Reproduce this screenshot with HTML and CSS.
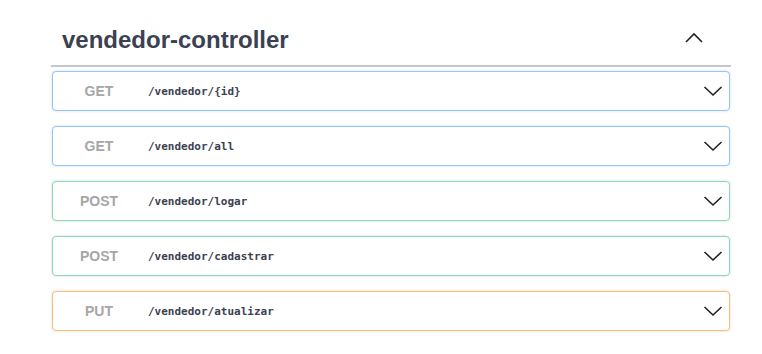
FILE: index.html
```html
<!DOCTYPE html>
<html lang="en">
<head>
    <meta charset="UTF-8">
    <title>vendedor-controller</title>
    <link rel="stylesheet" href="styles.css">
</head>
<body>
    <div class="wrapper">
        <div class="tag-section">
            <h3 class="tag">
                <span class="tag-name">vendedor-controller</span>
                <svg class="arrow" width="20" height="20" viewBox="0 0 20 20"><path d="M2 14 L10 6 L18 14" fill="none" stroke="#222" stroke-width="1.6"/></svg>
            </h3>

            <div class="opblock get">
                <span class="method">GET</span>
                <span class="path">/vendedor/{id}</span>
                <svg class="arrow" width="20" height="20" viewBox="0 0 20 20"><path d="M1.5 6 L10 14 L18.5 6" fill="none" stroke="#222" stroke-width="1.6"/></svg>
            </div>
            <div class="opblock get">
                <span class="method">GET</span>
                <span class="path">/vendedor/all</span>
                <svg class="arrow" width="20" height="20" viewBox="0 0 20 20"><path d="M1.5 6 L10 14 L18.5 6" fill="none" stroke="#222" stroke-width="1.6"/></svg>
            </div>
            <div class="opblock post">
                <span class="method">POST</span>
                <span class="path">/vendedor/logar</span>
                <svg class="arrow" width="20" height="20" viewBox="0 0 20 20"><path d="M1.5 6 L10 14 L18.5 6" fill="none" stroke="#222" stroke-width="1.6"/></svg>
            </div>
            <div class="opblock post">
                <span class="method">POST</span>
                <span class="path">/vendedor/cadastrar</span>
                <svg class="arrow" width="20" height="20" viewBox="0 0 20 20"><path d="M1.5 6 L10 14 L18.5 6" fill="none" stroke="#222" stroke-width="1.6"/></svg>
            </div>
            <div class="opblock put">
                <span class="method">PUT</span>
                <span class="path">/vendedor/atualizar</span>
                <svg class="arrow" width="20" height="20" viewBox="0 0 20 20"><path d="M1.5 6 L10 14 L18.5 6" fill="none" stroke="#222" stroke-width="1.6"/></svg>
            </div>
        </div>
    </div>
</body>
</html>
```

FILE: styles.css
```css
body {
    margin: 0;
    background: #fff;
    font-family: "Liberation Sans", Arial, sans-serif;
    color: #3b4151;
}
.wrapper {
    padding: 15px 0 0 52px;
    width: 678px;
}
.tag {
    display: flex;
    align-items: center;
    justify-content: space-between;
    margin: 0 -1px 4px;
    padding: 10px 27px 10px 11px;
    height: 30px;
    border-bottom: 2px solid rgba(59,65,81,.3);
    font-size: 24px;
    font-weight: bold;
    color: #3b4151;
}
.tag .arrow {
    margin-top: -4px;
}
.opblock {
    display: flex;
    align-items: center;
    height: 38px;
    padding: 0 6px;
    margin-bottom: 15px;
    border: 1px solid;
    border-radius: 4px;
    box-shadow: 0 0 3px rgba(0,0,0,.15);
    background: #fff;
}
.opblock.get {
    border-color: #8ec6fd;
}
.opblock.post {
    border-color: #86ddb4;
}
.opblock.put {
    border-color: #fdbd72;
}
.method {
    min-width: 80px;
    text-align: center;
    font-size: 14px;
    font-weight: bold;
    color: #a6a6a6;
}
.path {
    flex: 1;
    padding: 0 9px;
    font-family: "DejaVu Sans Mono", monospace;
    font-size: 11px;
    font-weight: 600;
    color: #3b4151;
}
```
